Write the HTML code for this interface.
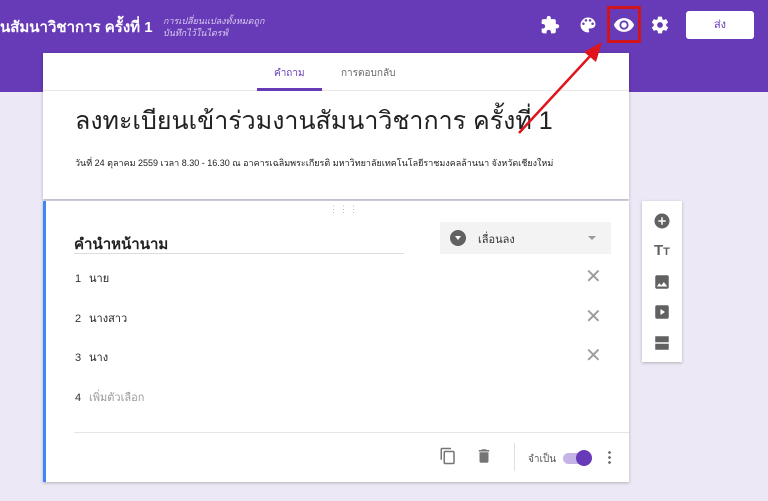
<!DOCTYPE html>
<html><head><meta charset="utf-8"><style>
*{margin:0;padding:0;box-sizing:border-box}
body{width:768px;height:501px;overflow:hidden;background:#ece8f5;font-family:"Liberation Sans",sans-serif;position:relative}
.hdr{position:absolute;left:0;top:0;width:768px;height:92px;background:#673ab7}
.abs{position:absolute}
.card{position:absolute;background:#fff;box-shadow:0 1px 3px rgba(0,0,0,.25)}
.x{position:absolute;color:#9e9e9e;font-size:20px;line-height:20px}
.opt{position:absolute;font-size:11px;color:#222}
.opt b{font-weight:normal;display:inline-block;width:14px;color:#333}
</style></head><body>
<div class="hdr"></div>
<div class="abs" style="left:0;top:15px;color:#fff;font-size:15px;font-weight:bold">นสัมนาวิชาการ ครั้งที่ 1</div>
<div class="abs" style="left:163px;top:15px;color:#d9cdf0;font-size:9px;font-style:italic;line-height:12px">การเปลี่ยนแปลงทั้งหมดถูก<br>บันทึกไว้ในไดรฟ์</div>
<svg class="abs" style="left:540px;top:15px" width="20" height="20" viewBox="0 0 24 24"><path fill="#fff" d="M20.5 11H19V7c0-1.1-.9-2-2-2h-4V3.5a2.5 2.5 0 0 0-5 0V5H4c-1.1 0-2 .9-2 2v3.8h1.5c1.5 0 2.7 1.2 2.7 2.7S5 16.2 3.5 16.2H2V20c0 1.1.9 2 2 2h3.8v-1.5c0-1.5 1.2-2.7 2.700-2.7s2.7 1.2 2.7 2.7V22H17c1.1 0 2-.9 2-2v-4h1.5a2.5 2.5 0 0 0 0-5z"/></svg>
<svg class="abs" style="left:578px;top:15px" width="20" height="20" viewBox="0 0 24 24"><path fill="#fff" d="M12 3a9 9 0 0 0 0 18c.83 0 1.5-.67 1.5-1.5 0-.39-.15-.74-.39-1.010-.23-.26-.38-.61-.38-.99 0-.83.67-1.5 1.5-1.5H16c2.76 0 5-2.24 5-5 0-4.42-4.030-8-9-8zm-5.5 9a1.5 1.5 0 1 1 0-3 1.5 1.5 0 0 1 0 3zm3-4a1.5 1.5 0 1 1 0-3 1.5 1.5 0 0 1 0 3zm5 0a1.5 1.5 0 1 1 0-3 1.5 1.5 0 0 1 0 3zm3 4a1.5 1.5 0 1 1 0-3 1.5 1.5 0 0 1 0 3z"/></svg>
<svg class="abs" style="left:613px;top:14px" width="22" height="22" viewBox="0 0 24 24"><path fill="#fff" d="M12 4.5C7 4.5 2.7 7.6 1 12c1.7 4.4 6 7.5 11 7.5s9.3-3.1 11-7.5c-1.7-4.4-6-7.5-11-7.5zM12 17a5 5 0 1 1 0-10 5 5 0 0 1 0 10zm0-8a3 3 0 1 0 0 6 3 3 0 0 0 0-6z"/></svg>
<div class="abs" style="left:607px;top:6px;width:34px;height:37px;border:3px solid #d0141c"></div>
<svg class="abs" style="left:650px;top:15px" width="20" height="20" viewBox="0 0 24 24"><path fill="#fff" d="M19.4 13c.04-.32.06-.66.06-1s-.02-.68-.07-1l2.1-1.65c.2-.15.24-.42.12-.64l-2-3.46c-.12-.22-.39-.3-.61-.22l-2.49 1c-.52-.4-1.08-.73-1.69-.98l-.38-2.65A.49.49 0 0 0 14 2h-4c-.25 0-.46.18-.49.42l-.38 2.65c-.61.25-1.170.59-1.69.98l-2.49-1c-.23-.09-.49 0-.61.22l-2 3.46c-.13.22-.07.49.12.64L4.57 11c-.04.32-.07.66-.07 1s.02.68.07 1l-2.11 1.65c-.19.15-.24.42-.12.64l2 3.46c.12.22.39.3.61.22l2.49-1c.52.4 1.08.73 1.69.98l.38 2.65c.03.24.24.42.49.42h4c.25 0 .46-.18.49-.42l.38-2.65c.61-.25 1.17-.59 1.69-.98l2.49 1c.23.09.49 0 .61-.22l2-3.46c.12-.22.07-.49-.12-.64L19.4 13zM12 15.5a3.5 3.5 0 1 1 0-7 3.5 3.5 0 0 1 0 7z"/></svg>
<div class="abs" style="left:686px;top:11px;width:68px;height:28px;background:#fff;border-radius:3px;color:#673ab7;font-size:11px;text-align:center;line-height:28px">ส่ง</div>
<div class="card" style="left:43px;top:53px;width:586px;height:146px"></div>
<div class="abs" style="left:43px;top:53px;width:586px;height:38px;border-bottom:1px solid #e8e8e8"></div>
<div class="abs" style="left:274px;top:66px;font-size:10px;color:#673ab7">คำถาม</div>
<div class="abs" style="left:341px;top:66px;font-size:10px;color:#666">การตอบกลับ</div>
<div class="abs" style="left:257px;top:88px;width:65px;height:3px;background:#673ab7"></div>
<div class="abs" style="left:75px;top:101px;font-size:25px;color:#212121">ลงทะเบียนเข้าร่วมงานสัมนาวิชาการ ครั้งที่ 1</div>
<div class="abs" style="left:75px;top:156px;font-size:9px;color:#212121">วันที่ 24 ตุลาคม 2559 เวลา 8.30 - 16.30 ณ อาคารเฉลิมพระเกียรติ มหาวิทยาลัยเทคโนโลยีราชมงคลล้านนา จังหวัดเชียงใหม่</div>
<div class="card" style="left:43px;top:201px;width:586px;height:281px;border-left:3px solid #4285f4"></div>
<div class="abs" style="left:329px;top:204px;font-size:9px;color:#bbb;letter-spacing:1px">⋮⋮⋮</div>
<div class="abs" style="left:74px;top:232px;font-size:15px;color:#212121;font-weight:bold">คำนำหน้านาม</div>
<div class="abs" style="left:74px;top:253px;width:330px;height:1px;background:#ddd"></div>
<div class="abs" style="left:440px;top:222px;width:171px;height:32px;background:#f3f3f3"></div>
<div class="abs" style="left:450px;top:230px;width:16px;height:16px;border-radius:50%;background:#616161"></div>
<div class="abs" style="left:455px;top:236px;width:0;height:0;border-left:3px solid transparent;border-right:3px solid transparent;border-top:4px solid #fff"></div>
<div class="abs" style="left:478px;top:230px;font-size:11px;color:#333">เลื่อนลง</div>
<div class="abs" style="left:588px;top:236px;border-left:4px solid transparent;border-right:4px solid transparent;border-top:4px solid #999"></div>
<div class="opt" style="left:75px;top:269px"><b>1</b>นาย</div>
<div class="opt" style="left:75px;top:309px"><b>2</b>นางสาว</div>
<div class="opt" style="left:75px;top:348px"><b>3</b>นาง</div>
<div class="opt" style="left:75px;top:388px;color:#999"><b>4</b>เพิ่มตัวเลือก</div>
<div class="x" style="left:585px;top:267px">✕</div>
<div class="x" style="left:585px;top:307px">✕</div>
<div class="x" style="left:585px;top:346px">✕</div>
<div class="abs" style="left:74px;top:432px;width:555px;height:1px;background:#e5e5e5"></div>
<svg class="abs" style="left:439px;top:447px" width="18" height="18" viewBox="0 0 24 24"><path fill="#757575" d="M16 1H4c-1.1 0-2 .9-2 2v14h2V3h12V1zm3 4H8c-1.1 0-2 .9-2 2v14c0 1.1.9 2 2 2h11c1.1 0 2-.9 2-2V7c0-1.1-.9-2-2-2zm0 16H8V7h11v14z"/></svg>
<svg class="abs" style="left:475px;top:447px" width="18" height="18" viewBox="0 0 24 24"><path fill="#757575" d="M6 19c0 1.1.9 2 2 2h8c1.1 0 2-.9 2-2V7H6v12zM19 4h-3.5l-1-1h-5l-1 1H5v2h14V4z"/></svg>
<div class="abs" style="left:514px;top:443px;width:1px;height:28px;background:#e0e0e0"></div>
<div class="abs" style="left:528px;top:452px;font-size:10px;color:#555">จำเป็น</div>
<div class="abs" style="left:563px;top:453px;width:26px;height:11px;border-radius:6px;background:#c5b3e6"></div>
<div class="abs" style="left:576px;top:450px;width:16px;height:16px;border-radius:50%;background:#673ab7"></div>
<div class="abs" style="left:608px;top:450px;width:3px;height:14px;background:radial-gradient(circle,#666 1.2px,transparent 1.5px) 0 0/3px 5px"></div>
<div class="card" style="left:642px;top:201px;width:40px;height:161px"></div>
<svg class="abs" style="left:653px;top:212px" width="18" height="18" viewBox="0 0 24 24"><path fill="#616161" d="M12 2a10 10 0 1 0 0 20 10 10 0 0 0 0-20zm5 11h-4v4h-2v-4H7v-2h4V7h2v4h4v2z"/></svg>
<div class="abs" style="left:654px;top:242px;font-size:15px;font-weight:bold;color:#616161">T<span style="font-size:11px">T</span></div>
<svg class="abs" style="left:653px;top:273px" width="18" height="18" viewBox="0 0 24 24"><path fill="#616161" d="M21 19V5c0-1.1-.9-2-2-2H5c-1.1 0-2 .9-2 2v14c0 1.1.9 2 2 2h14c1.1 0 2-.9 2-2zM8.5 13.5l2.5 3 3.5-4.5 4.5 6H5l3.5-4.5z"/></svg>
<svg class="abs" style="left:653px;top:303px" width="18" height="18" viewBox="0 0 24 24"><path fill="#616161" d="M19 3H5c-1.1 0-2 .9-2 2v14c0 1.1.9 2 2 2h14c1.1 0 2-.9 2-2V5c0-1.1-.9-2-2-2zM10 16V8l6 4-6 4z"/></svg>
<svg class="abs" style="left:653px;top:334px" width="18" height="18" viewBox="0 0 24 24"><path fill="#616161" d="M3 3h18v8H3zM3 13h18v8H3z"/></svg>
<svg class="abs" style="left:0;top:0" width="768" height="501"><line x1="519" y1="133" x2="592" y2="54" stroke="#e0141c" stroke-width="2.5"/><polygon points="602,42 584,52 596,62" fill="#e0141c"/></svg>
</body></html>
